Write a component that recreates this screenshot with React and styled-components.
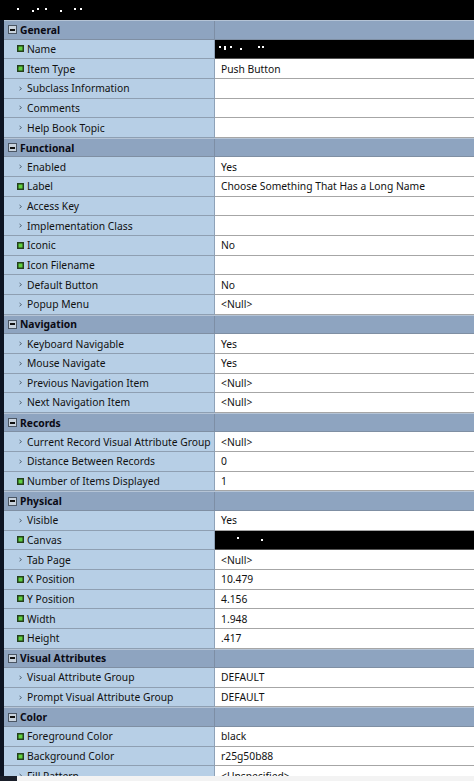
import React from 'react';
import styled, { createGlobalStyle } from 'styled-components';

const GlobalStyle = createGlobalStyle`
  html, body {
    margin: 0;
    padding: 0;
    background: #0b0f1a;
  }
  body {
    font-family: "Noto Sans", "Open Sans", sans-serif;
    overflow: hidden;
  }
`;

const sections = [
  {
    title: 'General',
    rows: [
      { label: 'Name', mark: 'set', value: { redacted: [4, 9, 9, 15, 25, 43, 47], top: 6 } },
      { label: 'Item Type', mark: 'set', value: 'Push Button' },
      { label: 'Subclass Information' },
      { label: 'Comments' },
      { label: 'Help Book Topic' },
    ],
  },
  {
    title: 'Functional',
    rows: [
      { label: 'Enabled', value: 'Yes' },
      { label: 'Label', mark: 'set', value: 'Choose Something That Has a Long Name' },
      { label: 'Access Key' },
      { label: 'Implementation Class' },
      { label: 'Iconic', mark: 'set', value: 'No' },
      { label: 'Icon Filename', mark: 'set' },
      { label: 'Default Button', value: 'No' },
      { label: 'Popup Menu', value: '<Null>' },
    ],
  },
  {
    title: 'Navigation',
    rows: [
      { label: 'Keyboard Navigable', value: 'Yes' },
      { label: 'Mouse Navigate', value: 'Yes' },
      { label: 'Previous Navigation Item', value: '<Null>' },
      { label: 'Next Navigation Item', value: '<Null>' },
    ],
  },
  {
    title: 'Records',
    rows: [
      { label: 'Current Record Visual Attribute Group', value: '<Null>' },
      { label: 'Distance Between Records', value: '0' },
      { label: 'Number of Items Displayed', mark: 'set', value: '1' },
    ],
  },
  {
    title: 'Physical',
    rows: [
      { label: 'Visible', value: 'Yes' },
      { label: 'Canvas', mark: 'set', value: { redacted: [22, 46], top: 6 } },
      { label: 'Tab Page', value: '<Null>' },
      { label: 'X Position', mark: 'set', value: '10.479' },
      { label: 'Y Position', mark: 'set', value: '4.156' },
      { label: 'Width', mark: 'set', value: '1.948' },
      { label: 'Height', mark: 'set', value: '.417' },
    ],
  },
  {
    title: 'Visual Attributes',
    rows: [
      { label: 'Visual Attribute Group', value: 'DEFAULT' },
      { label: 'Prompt Visual Attribute Group', value: 'DEFAULT' },
    ],
  },
  {
    title: 'Color',
    rows: [
      { label: 'Foreground Color', mark: 'set', value: 'black' },
      { label: 'Background Color', mark: 'set', value: 'r25g50b88' },
      { label: 'Fill Pattern', value: '<Unspecified>' },
    ],
  },
];

function Dots({ at, top }) {
  return (
    <DotLine>
      {at.map((x, i) => (
        <Dot key={i} style={{ left: x, top: top + (i % 3 === 1 ? 2 : 0) }} />
      ))}
    </DotLine>
  );
}

function Mark({ kind }) {
  if (kind === 'set') {
    return (
      <svg width="7" height="7" viewBox="0 0 7 7">
        <rect x="0" y="0" width="7" height="7" fill="#24401c" />
        <rect x="1.5" y="1.5" width="4" height="4" fill="#5fd040" />
      </svg>
    );
  }
  return (
    <svg width="7" height="7" viewBox="0 0 7 7">
      <path d="M2.5 2 L4.5 3.6 L2.5 5.2" stroke="#556677" strokeWidth="1" fill="none" />
    </svg>
  );
}

function Value({ value }) {
  if (value && typeof value === 'object') {
    return (
      <ValueCell dark>
        <Dots at={value.redacted} top={value.top} />
      </ValueCell>
    );
  }
  return <ValueCell>{value || ''}</ValueCell>;
}

export default function App() {
  return (
    <Page>
      <GlobalStyle />
      <TopBar>
        <Dots at={[17, 32, 37, 45, 60, 74, 80]} top={8} />
      </TopBar>
      <Sheet>
        {sections.map(section => (
          <React.Fragment key={section.title}>
            <HeaderRow>
              <HeaderLabel>
                <Toggle>
                  <span />
                </Toggle>
                {section.title}
              </HeaderLabel>
              <HeaderFill />
            </HeaderRow>
            {section.rows.map(row => (
              <Row key={row.label}>
                <LabelCell>
                  <MarkBox>
                    <Mark kind={row.mark} />
                  </MarkBox>
                  {row.label}
                </LabelCell>
                <Value value={row.value} />
              </Row>
            ))}
          </React.Fragment>
        ))}
      </Sheet>
      <BottomBar>
        <BottomGap />
        <BottomField />
      </BottomBar>
    </Page>
  );
}

const Page = styled.div`
  width: 474px;
  height: 781px;
  display: flex;
  flex-direction: column;
  overflow: hidden;
  background: #0d1422;
`;

const TopBar = styled.div`
  height: 20px;
  flex-shrink: 0;
  background: #000;
  position: relative;
`;

const DotLine = styled.div`
  position: absolute;
  inset: 0 0 0 0;
`;

const Dot = styled.i`
  position: absolute;
  width: 2px;
  height: 2px;
  background: #fff;
`;

const Sheet = styled.div`
  flex: 1;
  overflow: hidden;
  margin-left: 4px;
  background: #fff;
`;

const Row = styled.div`
  display: grid;
  grid-template-columns: 211px 1fr;
  height: 19.65px;
  box-sizing: border-box;
  font-size: 10.3px;
  color: #111;
`;

const HeaderRow = styled(Row)`
  background: #8ea4c0;
  border-top: 1px solid #b5c4d6;
`;

const HeaderLabel = styled.div`
  display: flex;
  align-items: center;
  gap: 3px;
  padding-left: 4px;
  font-weight: 700;
  color: #0a0a14;
  border-right: 1px solid #7d8ea5;
  border-bottom: 1px solid #7f8fa3;
`;

const HeaderFill = styled.div`
  border-bottom: 1px solid #7f8fa3;
`;

const Toggle = styled.span`
  width: 9px;
  height: 9px;
  background: #c9d3de;
  border: 1px solid #4a5563;
  box-sizing: border-box;
  display: flex;
  align-items: center;
  justify-content: center;
  span {
    width: 5px;
    height: 2px;
    background: #111;
  }
`;

const LabelCell = styled.div`
  display: flex;
  align-items: center;
  padding-left: 13px;
  gap: 3px;
  background: #b7cfe6;
  border-right: 1px solid #8ea2b8;
  border-bottom: 1px solid #8e9fb2;
  white-space: nowrap;
  overflow: hidden;
`;

const MarkBox = styled.span`
  width: 7px;
  height: 7px;
  display: flex;
`;

const ValueCell = styled.div`
  display: flex;
  align-items: center;
  padding-left: 6px;
  position: relative;
  background: ${props => (props.dark ? '#000' : '#fff')};
  border-bottom: 1px solid ${props => (props.dark ? '#555' : '#a6a6a6')};
  white-space: nowrap;
  overflow: hidden;
`;

const BottomBar = styled.div`
  height: 5px;
  flex-shrink: 0;
  display: flex;
  background: #0d1422;
`;

const BottomGap = styled.div`
  width: 17px;
  background: #1a1f2a;
`;

const BottomField = styled.div`
  flex: 1;
  background: #f3f3f3;
`;
